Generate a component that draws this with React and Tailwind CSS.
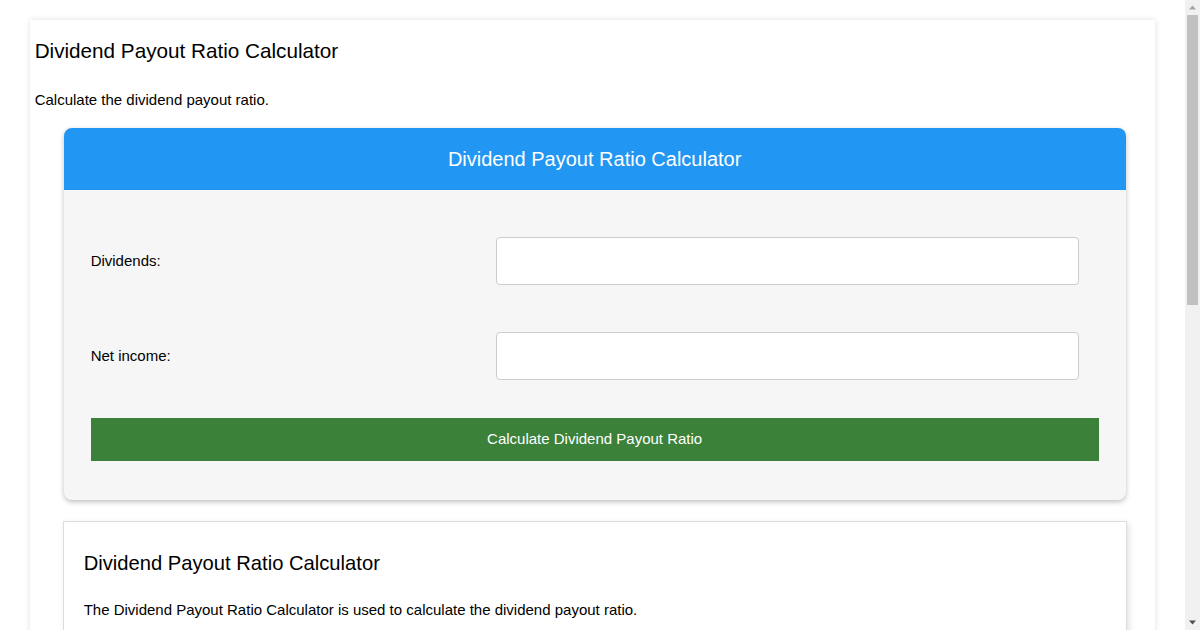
import React from "react";

function Row({ label }) {
  return (
    <div className="flex items-center">
      <label className="w-[405px] text-[15px]">{label}</label>
      <input
        type="text"
        className="w-[583px] h-[48px] bg-white border border-[#cccccc] rounded-[4px] px-3 outline-none"
      />
    </div>
  );
}

function Scrollbar() {
  return (
    <div className="w-[15px] shrink-0 h-full bg-[#f1f1f1] flex flex-col items-center">
      <svg width="15" height="15" viewBox="0 0 15 15" className="shrink-0">
        <path d="M4 9.5 L7.5 5.5 L11 9.5 Z" fill="#a3a3a3" />
      </svg>
      <div className="w-[11px] h-[290px] bg-[#c1c1c1]" />
      <div className="flex-1" />
      <svg width="15" height="15" viewBox="0 0 15 15" className="shrink-0">
        <path d="M4 5.5 L11 5.5 L7.5 9.5 Z" fill="#505050" />
      </svg>
    </div>
  );
}

export default function App() {
  return (
    <div className="h-screen flex overflow-hidden bg-white font-['Liberation_Sans',Arial,sans-serif] text-black">
      <div className="flex-1 min-w-0 h-full overflow-hidden pt-5">
        <div className="w-[95%] mx-auto bg-white shadow-[0_0_6px_rgba(0,0,0,0.12)] px-[5px] pb-10">
          <h1 className="pt-[19px] text-[20.7px] leading-[24px]">
            Dividend Payout Ratio Calculator
          </h1>
          <p className="mt-[28px] text-[15px] leading-[17px]">
            Calculate the dividend payout ratio.
          </p>

          <div className="mt-[20px] ml-[29px] w-[1062px] rounded-lg bg-[#f6f6f6] shadow-[0_2px_5px_rgba(0,0,0,0.25)]">
            <div className="h-[62px] rounded-t-lg bg-[#2196f3] flex items-center justify-center text-white text-[20px]">
              Dividend Payout Ratio Calculator
            </div>
            <div className="px-[27px] pt-[47px] pb-[39px]">
              <Row label="Dividends:" />
              <div className="mt-[47px]">
                <Row label="Net income:" />
              </div>
              <button className="mt-[38px] w-full h-[43px] bg-[#3b8139] text-white text-[15px]">
                Calculate Dividend Payout Ratio
              </button>
            </div>
          </div>

          <div className="mt-[21px] ml-[28px] w-[1064px] bg-white border border-[#dddddd] shadow-[2px_2px_6px_rgba(0,0,0,0.12)] px-5 pt-[30px] pb-[80px]">
            <h2 className="text-[20.2px] leading-[23px]">
              Dividend Payout Ratio Calculator
            </h2>
            <p className="mt-[26px] text-[15px] leading-[17px]">
              The Dividend Payout Ratio Calculator is used to calculate the
              dividend payout ratio.
            </p>
          </div>
        </div>
      </div>
      <Scrollbar />
    </div>
  );
}
